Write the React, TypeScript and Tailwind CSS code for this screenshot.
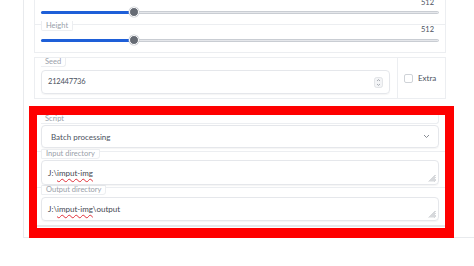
import React from "react";

const font = { fontFamily: "Lato, 'Liberation Sans', sans-serif" };

function Slider({ pct }: { pct: number }) {
  return (
    <div className="relative h-[10px] flex items-center">
      <div className="h-[3px] w-full rounded-full bg-[#e5e7eb] border border-[#c9cdd3]" />
      <div
        className="absolute left-0 top-[3.5px] h-[3px] rounded-full bg-[#1e5fd8]"
        style={{ width: `${pct}%` }}
      />
      <div
        className="absolute top-0 w-[10px] h-[10px] rounded-full bg-[#666b74] border border-white shadow-[0_0_0_0.5px_#c7cbd1]"
        style={{ left: `calc(${pct}% - 5px)` }}
      />
    </div>
  );
}

function Tab({ children, className = "" }: { children: React.ReactNode; className?: string }) {
  return (
    <div
      className={`self-start bg-white border-r border-b border-[#eceef1] rounded-br-[3px] px-[4px] text-[7.5px] leading-[8px] text-[#99a0a9] ${className}`}
    >
      {children}
    </div>
  );
}

function Resize() {
  return (
    <svg width="8" height="8" viewBox="0 0 8 8" className="absolute right-[2px] bottom-[2px]">
      <path d="M7.5 1 L1 7.5 M7.5 3 L3 7.5 M7.5 5 L5 7.5 M7.5 6.5 L6.5 7.5" stroke="#8d939b" strokeWidth="0.7" />
    </svg>
  );
}

function Spell({ children }: { children: React.ReactNode }) {
  return (
    <span className="underline decoration-wavy decoration-[#e0303a] decoration-[0.7px] underline-offset-[2px]">
      {children}
    </span>
  );
}

export default function App() {
  return (
    <div className="w-[474px] h-[266px] bg-white relative overflow-hidden text-[#3f4650]" style={font}>
      <div className="ml-[23px] w-[470px] h-[238px] border-l border-b border-[#e8eaed] pl-[10px] flex flex-col">
        {/* sliders block */}
        <div className="w-[412px] h-[53px] border-x border-b border-[#eceef1] flex flex-col">
          <div className="h-[24px] px-[6px] flex flex-col">
            <div className="h-[7px] flex justify-end">
              <span className="text-[7.5px] leading-[10px] -mt-[2px] mr-[5px] text-[#4b5260]">512</span>
            </div>
            <Slider pct={23.4} />
          </div>
          <div className="h-[28px] border-t border-[#eceef1] flex flex-col px-[6px]">
            <div className="h-[10px] flex justify-between items-start">
              <div className="-mt-[4px] bg-white border border-t-0 border-[#eceef1] px-[4px] text-[7.5px] leading-[9px] text-[#99a0a9] rounded-b-[2px]">
                Height
              </div>
              <span className="text-[7.5px] leading-[10px] mr-[5px] text-[#4b5260]">512</span>
            </div>
            <Slider pct={23.4} />
          </div>
        </div>

        {/* seed block */}
        <div className="mt-[4px] w-[412px] h-[42px] border border-[#eceef1] flex">
          <div className="w-[362px] flex flex-col px-[6px]">
            <Tab>Seed</Tab>
            <div className="mt-[3px] w-[349px] h-[24px] border border-[#e5e7eb] rounded-[4px] shadow-[0_1px_1px_rgba(0,0,0,0.04)] flex items-center justify-between pl-[6px] pr-[6px]">
              <span className="text-[7.5px] tracking-[-0.2px] text-[#4b5260]">212447736</span>
              <svg width="9" height="11" viewBox="0 0 9 11">
                <rect x="0.5" y="0.5" width="8" height="10" rx="2" fill="#f3f4f6" stroke="#d4d7dc" strokeWidth="0.6" />
                <path d="M3 4 L4.5 2.6 L6 4 M3 7 L4.5 8.4 L6 7" stroke="#8b9099" strokeWidth="0.7" fill="none" />
              </svg>
            </div>
          </div>
          <div className="flex-1 border-l border-[#eceef1] flex items-center pl-[6px] gap-[5px]">
            <div className="w-[9px] h-[9px] rounded-[2px] border border-[#cfd3d8] bg-white" />
            <span className="text-[8px] text-[#4b5260]">Extra</span>
          </div>
        </div>

        {/* script block */}
        <div className="mt-[9px] w-[412px] h-[120px] border-x border-t border-[#eceef1] flex flex-col">
          <div className="h-[43px] border-b border-[#eceef1] flex flex-col px-[6px]">
            <div className="mt-[6px]">
              <Tab>Script</Tab>
            </div>
            <div className="mt-[1px] h-[23px] border border-[#e5e7eb] rounded-[4px] shadow-[0_1px_1px_rgba(0,0,0,0.04)] flex items-center justify-between pl-[9px] pr-[8px]">
              <span className="text-[8px] text-[#4b5260]">Batch processing</span>
              <svg width="7" height="5" viewBox="0 0 7 5">
                <path d="M1 1 L3.5 3.5 L6 1" stroke="#6b7079" strokeWidth="0.8" fill="none" />
              </svg>
            </div>
          </div>
          <div className="h-[36px] border-b border-[#eceef1] flex flex-col px-[6px]">
            <Tab className="-mt-[3px] border-l border-t">Input directory</Tab>
            <div className="relative mt-[1px] h-[25px] border border-[#e5e7eb] rounded-[4px] shadow-[0_1px_1px_rgba(0,0,0,0.04)] flex items-center pl-[6px]">
              <span className="text-[8px] text-[#3f4650]">
                J:\<Spell>imput-img</Spell>
              </span>
              <Resize />
            </div>
          </div>
          <div className="h-[36px] flex flex-col px-[6px]">
            <Tab className="-mt-[3px] border-l border-t">Output directory</Tab>
            <div className="relative mt-[2px] h-[24px] border border-[#e5e7eb] rounded-[4px] shadow-[0_1px_1px_rgba(0,0,0,0.04)] flex items-center pl-[6px]">
              <span className="text-[8px] text-[#3f4650]">
                J:\<Spell>imput-img</Spell>\output
              </span>
              <Resize />
            </div>
          </div>
          <div className="mt-[1px] h-[2px] bg-[#e6e8eb]" />
        </div>
      </div>

      {/* red annotation rectangle */}
      <div className="absolute left-[29px] top-[106px] w-[425px] h-[132px] border-l-[8px] border-t-[9px] border-r-[9px] border-b-[10px] border-[#fe0000]" />
    </div>
  );
}
